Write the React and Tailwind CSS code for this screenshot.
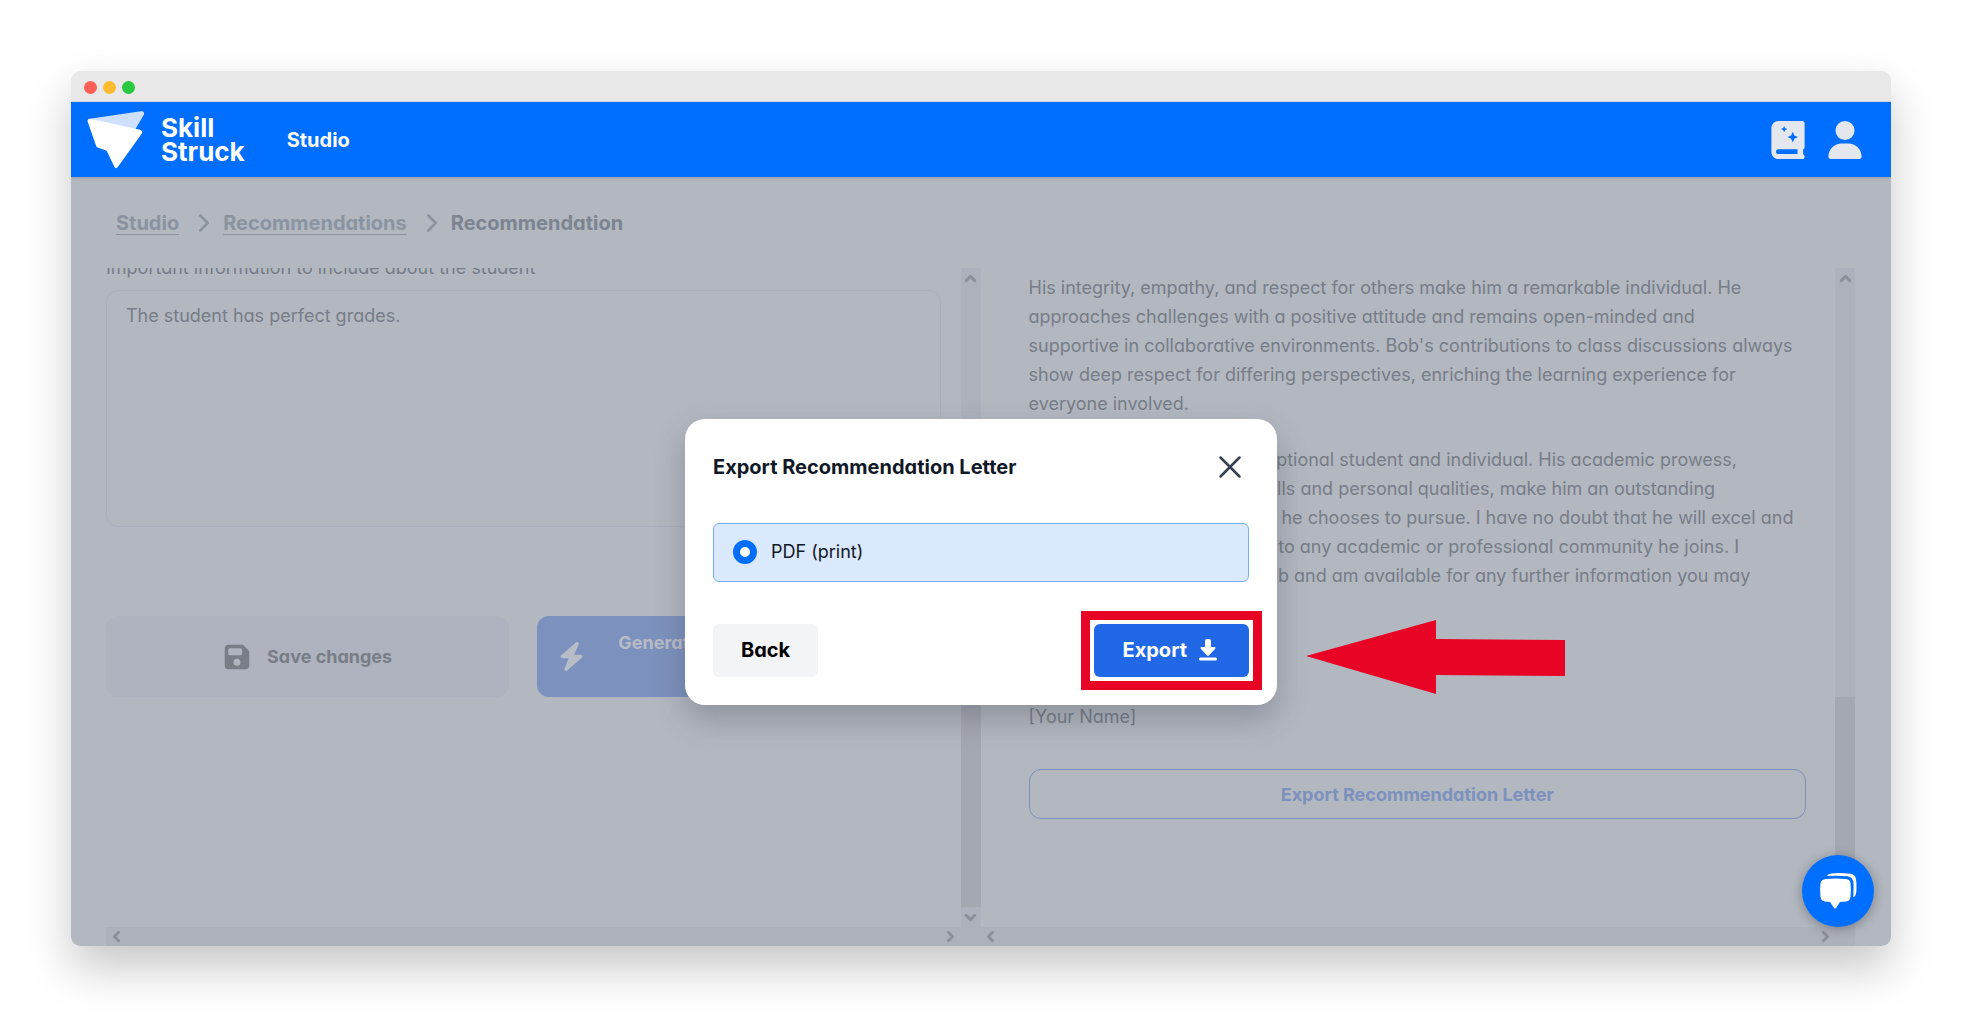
import { ChevronDown, ChevronLeft, ChevronRight, ChevronUp, X } from "lucide-react";
import { FaBolt, FaFloppyDisk, FaUser } from "react-icons/fa6";

const LETTER = [
  [
    "His integrity, empathy, and respect for others make him a remarkable individual. He",
    "approaches challenges with a positive attitude and remains open-minded and",
    "supportive in collaborative environments. Bob's contributions to class discussions always",
    "show deep respect for differing perspectives, enriching the learning experience for",
    "everyone involved.",
  ],
  [
    "In conclusion, Bob is an exceptional student and individual. His academic prowess,",
    "combined with leadership skills and personal qualities, make him an outstanding",
    "candidate for each endeavor he chooses to pursue. I have no doubt that he will excel and",
    "contribute very meaningfully to any academic or professional community he joins. I",
    "wholeheartedly commend Bob and am available for any further information you may",
    "require.",
  ],
  ["Sincerely,"],
];

function Logo() {
  return (
    <svg className="h-[59px] w-[58px]" viewBox="50 118 174 176" aria-hidden="true">
      <path fill="#cfe0ff" d="M58 144 212 121q11-1 9 10l-27 46z" />
      <path
        fill="#fff"
        d="M61 144 209 177q10 3 5 12L143 288q-6 8-11 0L109 240 82 230q-4-2-5-6L52 153q-2-11 9-9z"
      />
    </svg>
  );
}

function BookSparkles() {
  return (
    <svg className="h-[38px] w-[34px]" viewBox="0 0 448 512" aria-hidden="true">
      <path
        fill="#e5e7ef"
        d="M96 0C43 0 0 43 0 96V416c0 53 43 96 96 96H416c17.7 0 32-14.3 32-32 0-14-8-24-20-29V381c12-5 20-15 20-29V32c0-17.700-14.300-32-32-32zM96 380H352v66H96c-44 0-44-66 0-66z"
      />
      <path
        fill="#006eff"
        d="M172 66l13 29 30 13-30 13-13 30-13-30-30-13 30-13zM288 146l21 50 50 21-50 21-21 50-21-50-50-21 50-21z"
      />
    </svg>
  );
}

function DownloadIcon() {
  return (
    <svg className="h-[22px] w-[18px]" viewBox="0 0 18 22" fill="#fff" aria-hidden="true">
      <path d="M6 2q0-2 2-2h2q2 0 2 2v6h3.500q1.800.2.700 1.800l-6 6.500q-1.200 1-2.400 0l-6-6.500Q.7 8.200 2.500 8H6z" />
      <rect y="18.500" width="18" height="3" rx="1.500" />
    </svg>
  );
}

function ChatIcon() {
  return (
    <svg className="h-9 w-[38px]" viewBox="0 0 38 36" fill="#fff" aria-hidden="true">
      <path d="M7 6q9-1 20 0 4 .5 4.500 4 .8 7 0 14-.5 4-4.500 4.500l-6 .5-4 6q-1 1-2 0l-4-6-5-.5Q2 28 1.500 24q-.8-7 0-14Q2 6.500 7 6z" />
      <path d="M8 3Q9 .5 12 .4q10-.8 19 .4 5 .7 6 5 .9 7 .2 14-.3 3.500-3 4.500 .6-8 .3-14-.4-6-6-7Q18 2.300 8 3z" />
    </svg>
  );
}

function ScrollButton({ icon: Icon, label, className }) {
  return (
    <button type="button" aria-label={label} className={`flex items-center justify-center ${className}`}>
      <Icon size={17} strokeWidth={4} aria-hidden="true" />
    </button>
  );
}

function Pane({ children }) {
  return (
    <section className="flex min-h-0 min-w-0 flex-1 flex-col text-[#8b909b]">
      <div className="flex min-h-0 flex-1">
        <div className="min-w-0 flex-1 overflow-hidden">{children}</div>
        <div className="flex w-5 shrink-0 flex-col bg-[#adb1bb]">
          <ScrollButton icon={ChevronUp} label="Scroll up" className="h-5" />
          <div className="flex flex-1 items-end">
            <div className="h-[210px] w-full bg-[#a4a8b1]" />
          </div>
          <ScrollButton icon={ChevronDown} label="Scroll down" className="h-5" />
        </div>
      </div>
      <div className="flex h-[19px] shrink-0 justify-between bg-[#adb1bb] pr-5">
        <ScrollButton icon={ChevronLeft} label="Scroll left" className="w-5" />
        <ScrollButton icon={ChevronRight} label="Scroll right" className="w-5" />
      </div>
    </section>
  );
}

function FormPane() {
  return (
    <Pane>
      <div className="pr-5 text-lg text-[#787d88]">
        <label htmlFor="info" className="-mt-3 block h-6 leading-6">
          Important information to include about the student
        </label>
        <textarea
          id="info"
          defaultValue="The student has perfect grades."
          className="mt-[10px] block h-[237px] w-full resize-none rounded-xl border border-[#aaafbd] px-[19px] py-[11px] leading-7"
        />
        <div className="mt-[89px] grid grid-cols-2 gap-7 font-bold">
          <button
            type="button"
            className="flex h-[81px] items-center justify-center gap-4 rounded-xl bg-[#afb3bf]"
          >
            <FaFloppyDisk size={28} aria-hidden="true" />
            Save changes
          </button>
          <button
            type="button"
            className="flex h-[81px] items-center gap-8 rounded-xl bg-[#7c91bd] px-5 text-[#b7bcc6]"
          >
            <FaBolt size={29} aria-hidden="true" />
            <span className="leading-7">
              Generate Recommendation
              <br />
              Letter
            </span>
          </button>
        </div>
      </div>
    </Pane>
  );
}

function LetterPane() {
  return (
    <Pane>
      <div className="pt-[5px] pr-[29px] pl-12 text-lg leading-[29px] whitespace-nowrap text-[#787d88]">
        {LETTER.map((lines) => (
          <p key={lines[0]} className="mb-[27px]">
            {lines.map((line) => (
              <span key={line} className="block">
                {line}
              </span>
            ))}
          </p>
        ))}
        <p>[Your Name]</p>
        <button
          type="button"
          className="mt-[38px] h-[50px] w-full rounded-xl border border-[#7c91bd] font-bold text-[#7c91bd]"
        >
          Export Recommendation Letter
        </button>
      </div>
    </Pane>
  );
}

function ExportDialog() {
  return (
    <div
      role="dialog"
      aria-labelledby="export-title"
      className="relative w-[592px] rounded-[20px] bg-white p-7 shadow-[0_14px_30px_rgba(60,64,75,0.3)]"
    >
      <div className="flex h-10 items-center justify-between">
        <h2 id="export-title" className="text-xl font-bold text-[#111827]">
          Export Recommendation Letter
        </h2>
        <button type="button" aria-label="Close" className="text-[#374151]">
          <X size={38} strokeWidth={1.6} aria-hidden="true" />
        </button>
      </div>
      <label className="mt-9 flex h-[59px] items-center gap-[14px] rounded-md border border-[#76b0fb] bg-[#dbe9fe] px-[19px] text-lg text-[#111827]">
        <input
          type="radio"
          name="format"
          defaultChecked
          className="size-6 appearance-none rounded-full border-[7px] border-[#006eff] bg-white"
        />
        PDF (print)
      </label>
      <div className="mt-[42px] flex justify-between text-xl font-bold">
        <button type="button" className="h-[53px] rounded-md bg-[#f3f4f6] px-7 text-black">
          Back
        </button>
        <div className="relative">
          <button
            type="button"
            className="flex h-[53px] items-center gap-3 rounded-md bg-[#2168e6] pr-8 pl-[29px] text-white"
          >
            Export
            <DownloadIcon />
          </button>
          <div className="pointer-events-none absolute -inset-[13px] border-[9px] border-[#e80425]" />
        </div>
      </div>
      <svg
        className="absolute top-[200px] left-full ml-[29px] h-[75px] w-[260px]"
        viewBox="0 0 260 75"
        fill="#e80425"
        aria-hidden="true"
      >
        <path d="M0 37 130 1V20L259 21V57L130 56V75z" />
      </svg>
    </div>
  );
}

export default function App() {
  return (
    <div className="flex min-h-screen bg-white p-[71px] font-['Inter','Liberation_Sans',sans-serif] [font-feature-settings:'cv11']">
      <div className="flex min-w-0 flex-1 flex-col overflow-hidden rounded-[9px] shadow-[0_22px_45px_rgba(0,0,0,0.22)]">
        <div className="flex h-[31px] shrink-0 items-center gap-[6px] border-b border-[#cfd8e6] bg-[#e8e8e8] px-[13px] pt-[2px]">
          <span className="size-[13px] rounded-full bg-[#ff5f57]" />
          <span className="size-[13px] rounded-full bg-[#febb2e]" />
          <span className="size-[13px] rounded-full bg-[#28c840]" />
        </div>
        <header className="z-10 flex h-[75px] shrink-0 items-center justify-between bg-[#006eff] pr-[27px] pl-4 text-white shadow-sm">
          <div className="flex items-center">
            <a href="#home" className="flex items-center gap-4 text-[26px] leading-6 font-bold">
              <Logo />
              <span>
                Skill
                <br />
                Struck
              </span>
            </a>
            <a href="#studio" className="ml-[42px] text-xl font-bold">
              Studio
            </a>
          </div>
          <div className="flex items-center gap-[21px] text-[#e5e7ef]">
            <button type="button" aria-label="Lesson library">
              <BookSparkles />
            </button>
            <button type="button" aria-label="Account">
              <FaUser size={38} aria-hidden="true" />
            </button>
          </div>
        </header>
        <main className="relative flex min-h-0 flex-1 flex-col bg-[#b2b7c0] pr-9 pl-[35px]">
          <nav
            aria-label="Breadcrumb"
            className="flex h-[91px] shrink-0 items-center pl-[10px] text-xl font-bold text-[#8b93a0]"
          >
            <a href="#studio" className="underline decoration-1 underline-offset-4">
              Studio
            </a>
            <ChevronRight size={30} strokeWidth={2} className="mr-1 ml-[10px]" aria-hidden="true" />
            <a href="#recommendations" className="underline decoration-1 underline-offset-4">
              Recommendations
            </a>
            <ChevronRight size={30} strokeWidth={2} className="mr-1 ml-[10px]" aria-hidden="true" />
            <span className="text-[#7d8490]">Recommendation</span>
          </nav>
          <div className="flex min-h-0 flex-1">
            <FormPane />
            <LetterPane />
          </div>
          <div className="absolute inset-0 flex items-center justify-center">
            <ExportDialog />
          </div>
          <button
            type="button"
            aria-label="Open chat"
            className="absolute right-[17px] bottom-[19px] flex size-[72px] items-center justify-center rounded-full bg-[#006eff] shadow-[0_2px_12px_rgba(0,0,0,0.3)]"
          >
            <ChatIcon />
          </button>
        </main>
      </div>
    </div>
  );
}
